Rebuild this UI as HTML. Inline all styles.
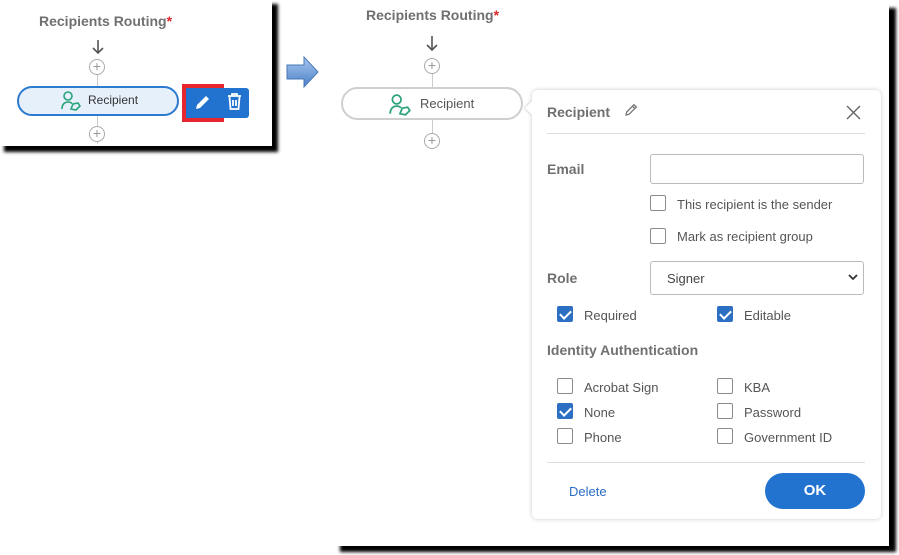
<!DOCTYPE html>
<html><head><meta charset="utf-8"><style>
*{box-sizing:border-box;margin:0;padding:0}
body{width:899px;height:555px;background:#fff;position:relative;overflow:hidden;font-family:"Liberation Sans",sans-serif;color:#4b4b4b}
.a{position:absolute}
.h{font-weight:bold;color:#707070;font-size:14px}
.t{font-size:13px;color:#555}
.cb{position:absolute;width:16px;height:16px;border:1px solid #8a8a8a;border-radius:2px;background:#fff}
.ck{background:#2d6fc2;border-color:#2d6fc2}
.ck:after{content:"";position:absolute;left:4px;top:1px;width:5px;height:9px;border:solid #fff;border-width:0 2px 2px 0;transform:rotate(45deg)}
.plus{position:absolute;width:16px;height:16px;border:1.5px solid #aaa;border-radius:50%;background:#fff;color:#999;font-size:14px;line-height:12px;text-align:center}
</style></head><body>
<!-- left panel -->
<div class="a" style="left:4px;top:4px;width:274px;height:148px;background:#000;filter:blur(1.5px)"></div>
<div class="a" style="left:0;top:0;width:272px;height:146px;background:#fff"></div>
<div class="a h" style="left:39px;top:13px;font-size:14px">Recipients Routing<span style="color:#e0242a">*</span></div>
<div class="a" style="left:97px;top:60px;width:1px;height:84px;background:#ccc"></div>
<svg class="a" style="left:91px;top:39px" width="14" height="16" viewBox="0 0 14 16" fill="none" stroke="#555" stroke-width="1.6"><path d="M7 1v13M2 9l5 5 5-5"/></svg>
<div class="plus" style="left:89px;top:59px">+</div>
<div class="plus" style="left:89px;top:126px">+</div>
<div class="a" style="left:17px;top:86px;width:162px;height:30px;border:2px solid #2d7bd0;border-radius:15px;background:#e6f0fa"></div>
<svg class="a" style="left:60px;top:90px" width="22" height="22" viewBox="0 0 22 22" fill="none" stroke="#2aa37a" stroke-width="1.6"><circle cx="8" cy="6" r="4"/><path d="M2 19c0-5 3-7 6-7 1.5 0 3 .5 4 1.5"/><path d="M11 19l2-5 5-1 2 3-4 4z"/></svg>
<div class="a t" style="left:88px;top:93px;font-size:12px;color:#333">Recipient</div>
<div class="a" style="left:182px;top:84px;width:42px;height:38px;background:#e8262e"></div>
<div class="a" style="left:186px;top:88px;width:34px;height:30px;background:#2273cf"></div>
<svg class="a" style="left:193px;top:92px" width="20" height="20" viewBox="0 0 20 20"><path d="M3 17l1-4 9-9 3 3-9 9z" fill="#fff"/></svg>
<div class="a" style="left:220px;top:88px;width:29px;height:30px;background:#2273cf;border-radius:0 3px 3px 0"></div>
<svg class="a" style="left:226px;top:92px" width="17" height="20" viewBox="0 0 17 20" fill="none" stroke="#fff" stroke-width="1.8"><path d="M2 4h13M6 4V2h5v2M3.5 5l1 12h8l1-12M7 8v6M10 8v6"/></svg>
<!-- arrow -->
<svg class="a" style="left:285px;top:55px" width="35" height="34" viewBox="0 0 35 34"><defs><linearGradient id="g" x1="0" y1="0" x2="0" y2="1"><stop offset="0" stop-color="#a8c8f0"/><stop offset="1" stop-color="#4a80c8"/></linearGradient></defs><path d="M2 10h17V2l14 15-14 15v-8H2z" fill="url(#g)" stroke="#4a78b8"/></svg>
<!-- right panel -->
<div class="a" style="left:340px;top:8px;width:556px;height:544px;background:#000;filter:blur(1.5px)"></div>
<div class="a" style="left:333px;top:0;width:556px;height:546px;background:#fff"></div>
<div class="a h" style="left:366px;top:7px">Recipients Routing<span style="color:#e0242a">*</span></div>
<div class="a" style="left:432px;top:60px;width:1px;height:84px;background:#ccc"></div>
<svg class="a" style="left:425px;top:35px" width="14" height="17" viewBox="0 0 14 17" fill="none" stroke="#555" stroke-width="1.6"><path d="M7 1v14M2 10l5 5 5-5"/></svg>
<div class="plus" style="left:424px;top:58px">+</div>
<div class="plus" style="left:424px;top:133px">+</div>
<div class="a" style="left:341px;top:87px;width:182px;height:33px;border:2px solid #cfcfcf;border-radius:17px;background:#fff"></div>
<svg class="a" style="left:388px;top:93px" width="24" height="24" viewBox="0 0 22 22" fill="none" stroke="#2aa37a" stroke-width="1.6"><circle cx="8" cy="6" r="4"/><path d="M2 19c0-5 3-7 6-7 1.5 0 3 .5 4 1.5"/><path d="M11 19l2-5 5-1 2 3-4 4z"/></svg>
<div class="a t" style="left:420px;top:96px;font-size:13px;color:#555">Recipient</div>
<!-- popup -->
<div class="a" style="left:532px;top:90px;width:349px;height:429px;background:#fff;border-radius:5px;box-shadow:0 0 4px rgba(0,0,0,.22)"></div>
<div class="a" style="left:527px;top:103px;width:10px;height:10px;background:#fff;transform:rotate(45deg);box-shadow:-1px 1px 2px rgba(0,0,0,.15)"></div>
<div class="a" style="left:532px;top:98px;width:10px;height:20px;background:#fff"></div>
<div class="a h" style="left:547px;top:104px">Recipient</div>
<svg class="a" style="left:624px;top:103px" width="14" height="14" viewBox="0 0 14 14" fill="none" stroke="#777" stroke-width="1.3"><path d="M2 12l.7-3L10 1.7l2.3 2.3L5 11.3z M8.5 3.2l2.3 2.3"/></svg>
<svg class="a" style="left:846px;top:105px" width="15" height="15" viewBox="0 0 15 15" stroke="#666" stroke-width="1.4"><path d="M1 1l13 13M14 1L1 14"/></svg>
<div class="a" style="left:547px;top:133px;width:318px;height:1px;background:#ddd"></div>
<div class="a h" style="left:547px;top:161px">Email</div>
<div class="a" style="left:650px;top:154px;width:214px;height:30px;border:1px solid #bbb;border-radius:3px"></div>
<div class="cb" style="left:650px;top:195px"></div><div class="a t" style="left:677px;top:197px">This recipient is the sender</div>
<div class="cb" style="left:650px;top:228px"></div><div class="a t" style="left:677px;top:229px">Mark as recipient group</div>
<div class="a h" style="left:547px;top:270px">Role</div>
<div class="a" style="left:650px;top:261px;width:214px;height:34px;border:1px solid #bbb;border-radius:3px"></div>
<div class="a t" style="left:667px;top:271px;color:#444">Signer</div>
<svg class="a" style="left:848px;top:273px" width="10" height="8" viewBox="0 0 10 8" fill="none" stroke="#333" stroke-width="1.8"><path d="M1 2l4 4 4-4"/></svg>
<div class="cb ck" style="left:557px;top:306px"></div><div class="a t" style="left:584px;top:308px">Required</div>
<div class="cb ck" style="left:717px;top:306px"></div><div class="a t" style="left:744px;top:308px">Editable</div>
<div class="a h" style="left:547px;top:342px">Identity Authentication</div>
<div class="cb" style="left:557px;top:378px"></div><div class="a t" style="left:584px;top:380px">Acrobat Sign</div>
<div class="cb" style="left:717px;top:378px"></div><div class="a t" style="left:744px;top:380px">KBA</div>
<div class="cb ck" style="left:557px;top:403px"></div><div class="a t" style="left:584px;top:405px">None</div>
<div class="cb" style="left:717px;top:403px"></div><div class="a t" style="left:744px;top:405px">Password</div>
<div class="cb" style="left:557px;top:428px"></div><div class="a t" style="left:584px;top:430px">Phone</div>
<div class="cb" style="left:717px;top:428px"></div><div class="a t" style="left:744px;top:430px">Government ID</div>
<div class="a" style="left:547px;top:462px;width:318px;height:1px;background:#ddd"></div>
<div class="a t" style="left:569px;top:484px;color:#2a6fc4">Delete</div>
<div class="a" style="left:765px;top:473px;width:100px;height:36px;background:#2273cf;border-radius:18px;color:#fff;font-weight:bold;font-size:15px;text-align:center;line-height:36px">OK</div>
</body></html>
